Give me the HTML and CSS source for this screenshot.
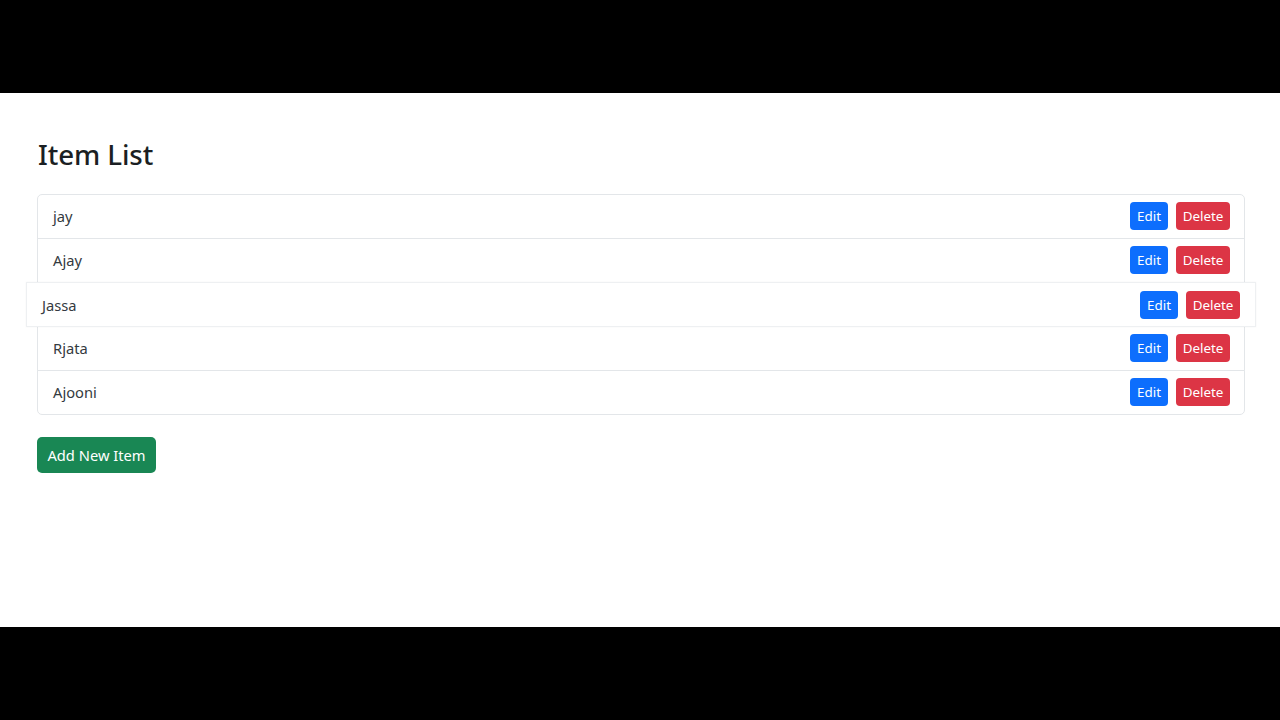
FILE: index.html
```html
<!DOCTYPE html>
<html lang="en">
<head>
<meta charset="utf-8">
<title>Item List</title>
<link rel="stylesheet" href="styles.css">
</head>
<body>
<div class="bar"></div>
<main class="page">
  <h2 class="title">Item List</h2>
  <ul class="list">
    <li class="row"><span class="name">jay</span><div class="actions"><button class="btn btn-edit">Edit</button><button class="btn btn-delete">Delete</button></div></li>
    <li class="row"><span class="name">Ajay</span><div class="actions"><button class="btn btn-edit">Edit</button><button class="btn btn-delete">Delete</button></div></li>
    <li class="row dragging"><span class="name">Jassa</span><div class="actions"><button class="btn btn-edit">Edit</button><button class="btn btn-delete">Delete</button></div></li>
    <li class="row"><span class="name">Rjata</span><div class="actions"><button class="btn btn-edit">Edit</button><button class="btn btn-delete">Delete</button></div></li>
    <li class="row"><span class="name">Ajooni</span><div class="actions"><button class="btn btn-edit">Edit</button><button class="btn btn-delete">Delete</button></div></li>
  </ul>
  <button class="btn-add">Add New Item</button>
</main>
<div class="bar"></div>
</body>
</html>
```
FILE: styles.css
```css
* { box-sizing: border-box; }
html, body { margin: 0; padding: 0; }
body {
  background: #000;
  width: 1280px;
  height: 720px;
  font-family: "Noto Sans", "Open Sans", sans-serif;
  color: #212529;
  display: flex;
  flex-direction: column;
}
.bar { height: 93px; background: #000; flex: none; }
.page {
  height: 534px;
  background: #fff;
  padding: 44px 35px 0 37px;
  flex: none;
}
.title {
  margin: 0 0 22px 1px;
  font-size: 27.7px;
  line-height: 35px;
  font-weight: 500;
  color: #1b1f23;
  letter-spacing: -0.1px;
}
.list {
  list-style: none;
  margin: 0;
  padding: 0;
}
.row {
  height: 45px;
  border: 1px solid #e3e6e9;
  margin-top: -1px;
  background: #fff;
  display: flex;
  align-items: center;
  justify-content: space-between;
  padding: 0 14px 1px 15px;
  font-size: 14.7px;
}
.row:first-child { margin-top: 0; border-radius: 5px 5px 0 0; }
.row:last-child { border-radius: 0 0 5px 5px; }
.row.dragging {
  margin-left: -11px;
  margin-right: -11px;
  padding-right: 15px;
  padding-bottom: 0;
  border-color: #eef0f2;
  position: relative;
  box-shadow: 0 0 2px rgba(0,0,0,0.04);
}
.name { color: #343a40; }
.actions { display: flex; gap: 8px; }
.btn {
  font-family: inherit;
  height: 28px;
  border: none;
  border-radius: 4px;
  color: #fff;
  font-size: 13.4px;
  padding: 0;
  line-height: 28px;
}
.btn-edit { background: #0d6efd; width: 38px; }
.btn-delete { background: #dc3545; width: 54px; }
.btn-add {
  margin-top: 22px;
  font-family: inherit;
  height: 36px;
  width: 119px;
  padding: 0;
  border: none;
  border-radius: 5px;
  background: #198754;
  color: #fff;
  font-size: 14.7px;
}
```
